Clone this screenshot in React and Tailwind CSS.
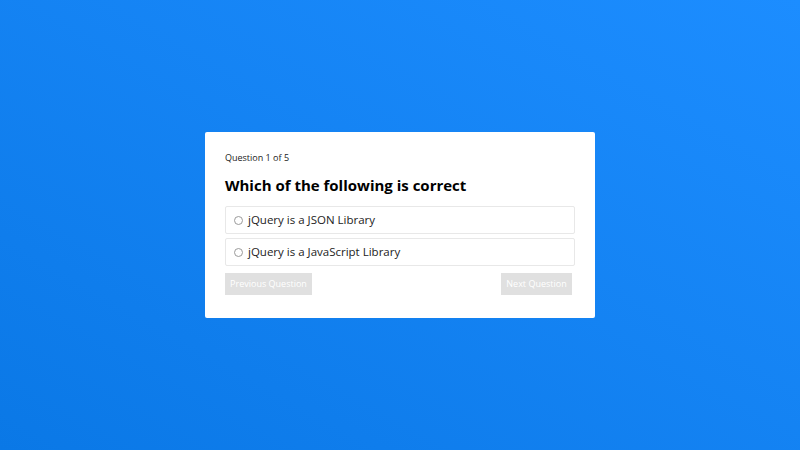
const options = ['jQuery is a JSON Library', 'jQuery is a JavaScript Library'];

export default function App() {
  return (
    <div
      className="flex h-[450px] w-full items-center justify-center bg-gradient-to-tr from-[#0a78e6] to-[#1c8dff]"
      style={{ fontFamily: '"Open Sans", sans-serif' }}
    >
      <div className="w-[390px] rounded-[2px] bg-white px-5 pt-[19px] pb-[23px]">
        <p className="text-[9px] leading-[14px] text-[#222]">Question 1 of 5</p>
        <h2 className="mt-[10px] text-[15px] font-bold leading-[20px] text-black">
          Which of the following is correct
        </h2>
        <div className="mt-[11px] flex flex-col gap-[4px]">
          {options.map((opt) => (
            <label
              key={opt}
              className="flex h-[28px] items-center gap-[5px] rounded-[2px] border border-[#e8e8e8] pl-[8px] text-[11.5px] text-[#222]"
            >
              <span className="h-[9px] w-[9px] rounded-full border border-[#9a9a9a]" />
              {opt}
            </label>
          ))}
        </div>
        <div className="mt-[7px] flex justify-between pr-[3px]">
          <button className="h-[22px] w-[87px] bg-[#e0e0e0] text-[9px] text-white">Previous Question</button>
          <button className="h-[22px] w-[71px] bg-[#e0e0e0] text-[9px] text-white">Next Question</button>
        </div>
      </div>
    </div>
  );
}
